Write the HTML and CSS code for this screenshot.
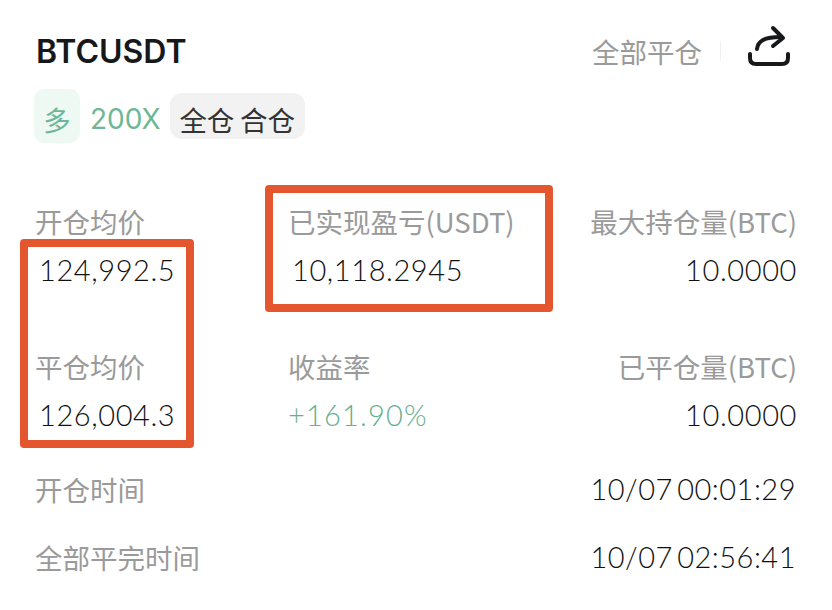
FILE: index.html
```html
<!DOCTYPE html>
<html>
<head>
    <title>BTCUSDT</title>
    <link rel="stylesheet" href="styles.css">
</head>
<body>
    <div class="card">
        <div class="header">
            <div class="symbol">BTCUSDT</div>
            <div class="actions">
                <span class="close-all">全部平仓</span>
                <span class="divider"></span>
                <svg class="share" width="46" height="46" viewBox="0 0 46 46" fill="none" stroke="#17181a" stroke-width="4" stroke-linecap="round" stroke-linejoin="round">
                    <path d="M11 25 C12 17 18 13 35 13"/>
                    <path d="M27 4 L37 14 L27 22"/>
                    <path d="M4 30 V34 C4 38 6 40 10 40 H36 C40 40 42 38 42 34 V30"/>
                </svg>
            </div>
        </div>
        <div class="tags">
            <span class="tag-side">多</span>
            <span class="leverage">200X</span>
            <span class="tag-mode">全仓 合仓</span>
        </div>
        <div class="stats">
            <div class="stat">
                <div class="label">开仓均价</div>
                <div class="value">124,992.5</div>
            </div>
            <div class="stat">
                <div class="label">已实现盈亏(USDT)</div>
                <div class="value">10,118.2945</div>
            </div>
            <div class="stat right">
                <div class="label">最大持仓量(BTC)</div>
                <div class="value">10.0000</div>
            </div>
            <div class="stat">
                <div class="label">平仓均价</div>
                <div class="value">126,004.3</div>
            </div>
            <div class="stat">
                <div class="label">收益率</div>
                <div class="value green">+161.90%</div>
            </div>
            <div class="stat right">
                <div class="label">已平仓量(BTC)</div>
                <div class="value">10.0000</div>
            </div>
        </div>
        <div class="time-row open-time">
            <span class="label">开仓时间</span>
            <span class="value">10/07 00:01:29</span>
        </div>
        <div class="time-row">
            <span class="label">全部平完时间</span>
            <span class="value">10/07 02:56:41</span>
        </div>
    </div>
    <!-- 红框标注 -->
    <div class="mark mark-price"></div>
    <div class="mark mark-pnl"></div>
</body>
</html>
```

FILE: styles.css
```css
* {
    box-sizing: border-box;
}
body {
    margin: 0;
    width: 832px;
    height: 610px;
    overflow: hidden;
    position: relative;
    background-color: #fff;
    font-family: "Noto Sans CJK SC", sans-serif;
}
.card {
    padding: 26px 35px 0 35px;
}
.header {
    display: flex;
    justify-content: space-between;
    align-items: center;
    height: 50px;
}
.symbol {
    margin-left: 1px;
    font-family: Inter, sans-serif;
    font-size: 32px;
    font-weight: 600;
    color: #17181a;
}
.actions {
    display: flex;
    align-items: center;
}
.close-all {
    font-size: 27.5px;
    color: #9a9a9a;
}
.divider {
    width: 1px;
    height: 20px;
    margin: 0 25px 0 18px;
    background-color: #f0f0f0;
}
.share {
    margin-right: 5px;
    margin-top: -8px;
}
.tags {
    display: flex;
    align-items: center;
    margin-top: 13px;
    margin-left: -1px;
}
.tag-side {
    width: 46px;
    height: 54px;
    line-height: 60px;
    text-align: center;
    font-size: 27.5px;
    color: #6db797;
    background-color: #eff9f4;
    border-radius: 10px;
}
.leverage {
    margin-left: 10px;
    padding-top: 6px;
    font-family: Inter, sans-serif;
    font-size: 28px;
    font-weight: 400;
    color: #6db797;
}
.tag-mode {
    margin-left: 9px;
    padding: 0 10px;
    height: 46px;
    line-height: 52px;
    font-size: 27.5px;
    letter-spacing: -0.2px;
    color: #333;
    background-color: #f2f2f2;
    border-radius: 12px;
}
.stats {
    display: grid;
    grid-template-columns: 253px 1fr 1fr;
    row-gap: 56px;
    margin-top: 58px;
}
.stat.right {
    text-align: right;
}
.label {
    height: 40px;
    line-height: 40px;
    font-size: 27.5px;
    color: #9a9a9a;
    white-space: nowrap;
}
.value {
    height: 40px;
    margin-top: 9px;
    padding-left: 4px;
    line-height: 40px;
    font-family: Lato, sans-serif;
    font-size: 29px;
    font-weight: 300;
    letter-spacing: 0.6px;
    color: #111;
    white-space: nowrap;
}
.stat.right .value {
    padding-left: 0;
}
.stat .green {
    padding-left: 0;
    margin-left: 0;
    letter-spacing: 1.2px;
    color: #67ae90;
}
.time-row {
    display: flex;
    justify-content: space-between;
    align-items: center;
    height: 40px;
    margin-top: 28px;
    padding-right: 1px;
}
.open-time {
    margin-top: 34px;
}
.time-row .value {
    margin-top: 0;
    letter-spacing: 0.5px;
    word-spacing: -4px;
}
.mark {
    position: absolute;
    border: 8px solid #e4572e;
    border-radius: 4px;
}
.mark-price {
    left: 20px;
    top: 239px;
    width: 174px;
    height: 209px;
}
.mark-pnl {
    left: 265px;
    top: 185px;
    width: 288px;
    height: 127px;
}
```
